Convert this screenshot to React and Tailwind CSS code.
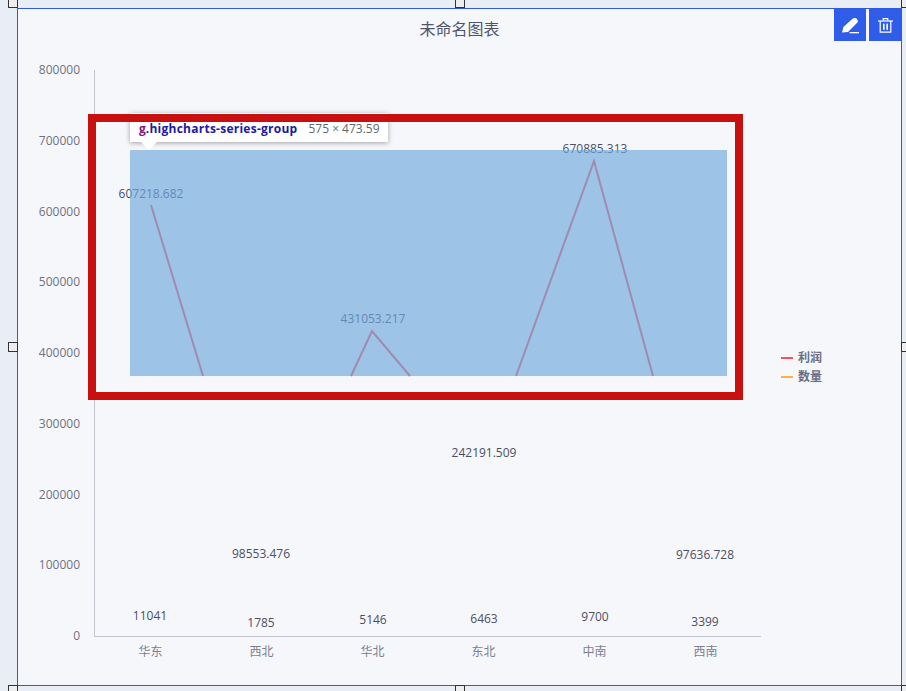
const FONT = "font-['Open_Sans','Noto_Sans_CJK_SC',sans-serif]";

const yTicks = ['800000', '700000', '600000', '500000', '400000', '300000', '200000', '100000', '0'];
const categories = ['华东', '西北', '华北', '东北', '中南', '西南'];

// x / y relative to the plot box (its top-left is 95,70 on the page)
const dataLabels = [
  { text: '607218.682', x: 56, y: 124 },
  { text: '431053.217', x: 278, y: 249 },
  { text: '670885.313', x: 500, y: 79 },
  { text: '242191.509', x: 389, y: 383 },
  { text: '98553.476', x: 166, y: 484 },
  { text: '97636.728', x: 610, y: 485 },
  { text: '11041', x: 55, y: 546 },
  { text: '1785', x: 166, y: 553 },
  { text: '5146', x: 278, y: 550 },
  { text: '6463', x: 389, y: 549 },
  { text: '9700', x: 500, y: 547 },
  { text: '3399', x: 610, y: 552 },
];

function Handle({ className }) {
  return <div className={`absolute h-[10px] w-[10px] border border-[#333] bg-[#eeeeee] ${className}`} />;
}

function PencilIcon() {
  return (
    <svg width="18" height="17" viewBox="0 0 18 17" fill="white">
      <path d="M1 15.6 L2.4 10 L11.8 1.6 Q13.6 0.4 15.2 1.2 L16.6 3 Q17.4 4.4 16.4 5.6 L7 15 Z" />
      <rect x="8.6" y="15" width="9.4" height="1.3" />
    </svg>
  );
}

function TrashIcon() {
  return (
    <svg width="15" height="15" viewBox="0 0 15 15" fill="white">
      <path d="M0 2.4 H15 V3.6 H0 Z" />
      <path d="M4.6 0 H10.4 V2.6 H9.2 V1.2 H5.8 V2.6 H4.6 Z" />
      <path d="M1.6 3 H2.8 V13.5 H12.2 V3 H13.4 V14.7 H1.6 Z" />
      <rect x="5" y="5.6" width="1.6" height="6.2" />
      <rect x="8.4" y="5.6" width="1.6" height="6.2" />
    </svg>
  );
}

export default function App() {
  return (
    <div className={`relative h-[691px] w-[906px] overflow-hidden bg-[#e9edf5] pl-[17px] pt-2 ${FONT}`}>
      {/* Selected chart box */}
      <div className="relative h-[678px] w-[885px] border border-[#3058e0] bg-[#f6f7fb]">
        <h1 className="pt-2 text-center text-base leading-6 font-normal text-[#50546a]">未命名图表</h1>

        <div className="mt-5 flex">
          {/* Y axis labels */}
          <div className="flex h-[584px] w-[62px] flex-col justify-between text-right text-xs leading-[18px] text-[#6e7183]">
            {yTicks.map((tick) => (
              <span key={tick}>{tick}</span>
            ))}
          </div>

          <div className="ml-[14px] mt-[9px] w-[667px]">
            {/* Plot */}
            <div className="relative h-[567px] border-b border-l border-[#c4c5cf]">
              <svg className="absolute left-0 top-0" width="666" height="566" fill="none" stroke="#ff4f5c" strokeWidth="2">
                <path d="M56 135 L108 306" />
                <path d="M256 306 L277 261 L315 306" />
                <path d="M421 306 L499 91 L558 306" />
              </svg>
              {dataLabels.map((label) => (
                <span
                  key={label.text}
                  className="absolute -translate-x-1/2 -translate-y-1/2 text-xs leading-4 text-[#4b4f63]"
                  style={{ left: label.x, top: label.y }}
                >
                  {label.text}
                </span>
              ))}
            </div>
            {/* X axis labels */}
            <div className="ml-px mt-[6px] grid grid-cols-6 text-center text-xs leading-[18px] text-[#7c7f90]">
              {categories.map((name) => (
                <span key={name}>{name}</span>
              ))}
            </div>
          </div>

          {/* Legend */}
          <div className="ml-5 mt-[289px] flex flex-col gap-[3px] text-xs leading-4 font-semibold text-[#6a6e82]">
            <div className="flex items-center gap-[5px]">
              <span className="h-[2px] w-3 bg-[#ff4f5c]" />
              利润
            </div>
            <div className="flex items-center gap-[5px]">
              <span className="h-[2px] w-3 bg-[#ffb04d]" />
              数量
            </div>
          </div>
        </div>

        {/* Edit / delete buttons */}
        <div className="absolute right-0 top-0 flex gap-[3px]">
          <button className="flex h-8 w-8 items-center justify-center bg-[#2f5ce8]">
            <PencilIcon />
          </button>
          <button className="flex h-8 w-8 items-center justify-center bg-[#2f5ce8]">
            <TrashIcon />
          </button>
        </div>
      </div>

      {/* Resize handles */}
      <Handle className="left-2 top-[-2px]" />
      <Handle className="left-[455px] top-[-2px]" />
      <Handle className="left-[901px] top-[-2px]" />
      <Handle className="left-2 top-[342px]" />
      <Handle className="left-[901px] top-[342px]" />
      <Handle className="left-2 top-[685px]" />
      <Handle className="left-[455px] top-[685px]" />
      <Handle className="left-[901px] top-[685px]" />

      {/* Inspector highlight laid over the series group */}
      <div className="absolute left-[130px] top-[150px] h-[226px] w-[597px] bg-[rgba(111,168,220,0.66)]" />
      <div className="absolute left-[130px] top-[113px] flex h-[29px] w-[258px] items-center bg-white pl-[9px] pt-[3px] text-xs shadow-[0_1px_5px_rgba(0,0,0,0.35)]">
        <span className="font-bold text-[#881280]">g</span>
        <span className="font-bold tracking-[0.25px] text-[#1a1aa6]">.highcharts-series-group</span>
        <span className="ml-[11px] text-[#666666]">575 × 473.59</span>
      </div>
      <div className="absolute left-[141px] top-[142px] h-0 w-0 border-x-[8px] border-t-[8px] border-x-transparent border-t-white" />

      {/* Red annotation frame */}
      <div className="absolute left-[88px] top-[114px] h-[286px] w-[655px] border-8 border-[#c81010]" />
    </div>
  );
}
